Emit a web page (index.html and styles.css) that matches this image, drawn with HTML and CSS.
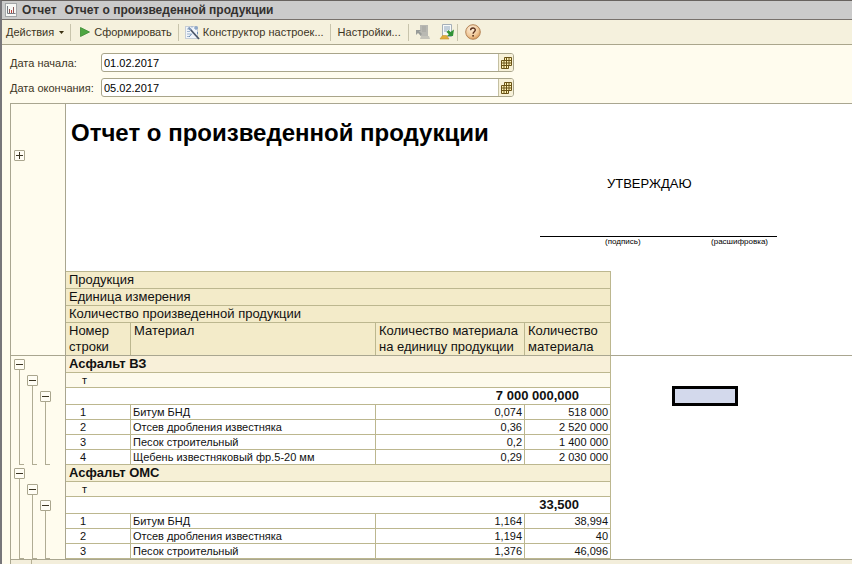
FILE: index.html
```
<!DOCTYPE html>
<html lang="ru">
<head>
<meta charset="utf-8">
<title>Отчет о произведенной продукции</title>
<link rel="stylesheet" href="styles.css">
</head>
<body>
<div class="window">
  <header class="titlebar">
    <svg class="title-icon" width="12" height="14" viewBox="0 0 12 14" aria-hidden="true">
      <rect x=".5" y=".5" width="11" height="13" fill="#f8f8f6" stroke="#a3a6a8"/>
      <path d="M2.500 3v7.500h8" fill="none" stroke="#777c84"/>
      <path d="M4.500 6v4M8.500 4v6" stroke="#8a5a5a"/>
      <path d="M6.500 7v3" stroke="#c0453f"/>
    </svg>
    <span>Отчет</span>
    <h1>Отчет о произведенной продукции</h1>
  </header>

  <nav class="toolbar">
    <button type="button" class="tool actions">Действия <svg width="5" height="3" viewBox="0 0 5 3" aria-hidden="true"><path d="M0 0h5L2.500 3z" fill="#3a3010"/></svg></button>
    <i class="sep"></i>
    <button type="button" class="tool run"><svg width="10" height="10" viewBox="0 0 10 10" aria-hidden="true"><path d="M.5.5 9.500 5 .5 9.500z" fill="#4ea641" stroke="#398a31" stroke-width=".8"/></svg>Сформировать</button>
    <i class="sep"></i>
    <button type="button" class="tool builder"><svg width="15" height="15" viewBox="0 0 15 15" aria-hidden="true">
      <rect x=".5" y="1.500" width="12" height="12" fill="#f1f5fa" stroke="#c6cdd5"/>
      <path d="M2 4h3M2 6.500h3M2 9h4M2 11.500h3" stroke="#9fb4cc"/>
      <path d="m5 4 9 10" stroke="#4b5668" stroke-width="1.800"/>
      <path d="m3.500 2.500 2.500 2.500" stroke="#7b95b8" stroke-width="2"/>
      <path d="m4 12 3-3.500M11 1v4M9 3h4M12.500 7v2M7 1.500v1" stroke="#6c8eb8"/>
    </svg>Конструктор настроек...</button>
    <i class="sep"></i>
    <button type="button" class="tool settings">Настройки...</button>
    <i class="sep"></i>
    <button type="button" class="tool icon" aria-label="Восстановить значения" disabled><svg width="16" height="16" viewBox="0 0 16 16" aria-hidden="true">
      <path d="M5 1h8v11H5z" fill="#b9b9b3"/><path d="M7 3h4M7 5h4M7 7h4" stroke="#a5a5a0"/>
      <path d="M6 12h8l1 3H5z" fill="#c5c4bb"/>
      <path d="M1 6h5L4.500 7.500 7 10l-1.500 1.500L3 9l-2 2z" fill="#999c99"/>
    </svg></button>
    <button type="button" class="tool icon" aria-label="Сохранить значения"><svg width="16" height="16" viewBox="0 0 16 16" aria-hidden="true">
      <path d="M3.500.5h9v12h-9z" fill="#f8faf8" stroke="#a5afb8"/>
      <path d="M5 3h6M5 5h6M5 7h3" stroke="#8da4bd"/>
      <path d="M1 15h9l-2.500-3.500h-4z" fill="#e1ad3d" stroke="#c4902d" stroke-width=".6"/>
      <path d="M14 12H8l1.800-1.800L7.500 8 9.500 6l2 2L15 5.500z" fill="#319337"/>
    </svg></button>
    <i class="sep"></i>
    <button type="button" class="tool icon help" aria-label="Справка"><svg width="16" height="16" viewBox="0 0 16 16" aria-hidden="true">
      <defs><radialGradient id="ball" cx=".4" cy=".3" r=".75"><stop offset="0" stop-color="#fff0dc"/><stop offset=".65" stop-color="#efc797"/><stop offset="1" stop-color="#d7924f"/></radialGradient></defs>
      <circle cx="8" cy="8" r="7.300" fill="url(#ball)" stroke="#b48558" stroke-width="1"/>
      <path d="M5.600 6.300C5.600 3.200 10.300 3.200 10.300 6c0 1.700-2.200 1.700-2.200 3.800" fill="none" stroke="#59301b" stroke-width="1.400"/>
      <rect x="7.300" y="11" width="1.600" height="1.600" fill="#59301b"/>
    </svg></button>
  </nav>

  <form class="params">
    <label for="date-from">Дата начала:</label>
    <div class="field">
      <input id="date-from" type="text" value="01.02.2017">
      <button type="button" aria-label="Выбрать дату начала"><svg width="11" height="12" viewBox="0 0 11 12" aria-hidden="true"><path d="M3.500.5h7v8h-3v3h-7v-8h3z" fill="#fff3b5" stroke="#6a5316"/><path d="M5.500 1v10M8 1v8M3 4v7M1 6h9M1 8.500h9M3 3.500h7" stroke="#6a5316"/></svg></button>
    </div>
    <label for="date-to">Дата окончания:</label>
    <div class="field">
      <input id="date-to" type="text" value="05.02.2017">
      <button type="button" aria-label="Выбрать дату окончания"><svg width="11" height="12" viewBox="0 0 11 12" aria-hidden="true"><path d="M3.500.5h7v8h-3v3h-7v-8h3z" fill="#fff3b5" stroke="#6a5316"/><path d="M5.500 1v10M8 1v8M3 4v7M1 6h9M1 8.500h9M3 3.500h7" stroke="#6a5316"/></svg></button>
    </div>
  </form>

  <main class="sheet">
    <section class="pane frozen">
      <div class="gutter top-gutter">
        <button type="button" class="node plus" aria-label="Развернуть"></button>
      </div>
      <div class="content">
        <div class="heading">
          <h2>Отчет о произведенной продукции</h2>
          <div class="approval">
            <p class="approve">УТВЕРЖДАЮ</p>
            <div class="captions"><span>(подпись)</span><span>(расшифровка)</span></div>
          </div>
        </div>
        <table class="grid head">
          <colgroup><col class="c-num"><col class="c-mat"><col class="c-unit"><col class="c-qty"></colgroup>
          <thead>
            <tr><th colspan="4">Продукция</th></tr>
            <tr><th colspan="4">Единица измерения</th></tr>
            <tr><th colspan="4">Количество произведенной продукции</th></tr>
            <tr class="columns"><th>Номер строки</th><th>Материал</th><th>Количество материала на единицу продукции</th><th>Количество материала</th></tr>
          </thead>
        </table>
      </div>
    </section>

    <section class="pane">
      <div class="gutter tree">
        <div class="branch"><button type="button" class="node" aria-label="Свернуть"></button><i></i></div>
        <div class="branch"><button type="button" class="node" aria-label="Свернуть"></button><i></i></div>
        <div class="branch"><button type="button" class="node" aria-label="Свернуть"></button><i></i></div>
      </div>
      <table class="grid">
        <colgroup><col class="c-num"><col class="c-mat"><col class="c-unit"><col class="c-qty"></colgroup>
        <tbody>
          <tr class="product"><th colspan="4">Асфальт ВЗ</th></tr>
          <tr class="unit"><td colspan="4">т</td></tr>
          <tr class="total"><td colspan="4">7 000 000,000</td></tr>
          <tr><td>1</td><td>Битум БНД</td><td>0,074</td><td>518 000</td></tr>
          <tr><td>2</td><td>Отсев дробления известняка</td><td>0,36</td><td>2 520 000</td></tr>
          <tr><td>3</td><td>Песок строительный</td><td>0,2</td><td>1 400 000</td></tr>
          <tr><td>4</td><td>Щебень известняковый фр.5-20 мм</td><td>0,29</td><td>2 030 000</td></tr>
        </tbody>
      </table>
      <div class="selected-cell"></div>
    </section>

    <section class="pane">
      <div class="gutter tree">
        <div class="branch"><button type="button" class="node" aria-label="Свернуть"></button><i></i></div>
        <div class="branch"><button type="button" class="node" aria-label="Свернуть"></button><i></i></div>
        <div class="branch"><button type="button" class="node" aria-label="Свернуть"></button><i></i></div>
      </div>
      <table class="grid">
        <colgroup><col class="c-num"><col class="c-mat"><col class="c-unit"><col class="c-qty"></colgroup>
        <tbody>
          <tr class="product second"><th colspan="4">Асфальт ОМС</th></tr>
          <tr class="unit"><td colspan="4">т</td></tr>
          <tr class="total"><td colspan="4">33,500</td></tr>
          <tr><td>1</td><td>Битум БНД</td><td>1,164</td><td>38,994</td></tr>
          <tr><td>2</td><td>Отсев дробления известняка</td><td>1,194</td><td>40</td></tr>
          <tr><td>3</td><td>Песок строительный</td><td>1,376</td><td>46,096</td></tr>
        </tbody>
      </table>
    </section>
    <div class="scrollbar"><i></i></div>
  </main>
</div>
</body>
</html>
```
FILE: styles.css
```
* { box-sizing: border-box; }
body {
  margin: 0;
  background: #fffcee;
  color: #3d361f;
  font: 11px/16px "Liberation Sans", Arial, sans-serif;
}
h1, h2, p { margin: 0; font: inherit; }
button, input { font: inherit; color: inherit; margin: 0; padding: 0; border: 0; background: none; }
svg { flex: none; display: block; }

.window {
  min-height: 100vh;
  display: flex;
  flex-direction: column;
  border-top: 1px solid #67625f;
  border-left: 2px solid #77767a;
  overflow: hidden;
}
.titlebar {
  display: flex;
  align-items: center;
  gap: 8px;
  height: 19px;
  padding-left: 3px;
  background: #cbcbcb;
  border-bottom: 1px solid #77716c;
  font-size: 12px;
  font-weight: bold;
  color: #33312f;
}
.title-icon { margin-right: -3px; }

.toolbar {
  display: flex;
  align-items: center;
  height: 25px;
  padding-left: 4px;
  background: #f5f1dd;
  border-bottom: 1px solid #aaa68c;
}
.tool { display: flex; align-items: center; white-space: nowrap; }
.sep { width: 1px; height: 17px; background: #c8c4ac; flex: none; }
.actions { gap: 5px; padding-right: 6px; }
.run { gap: 4px; padding: 0 6px 0 9px; }
.builder { gap: 3px; padding: 0 6px; }
.settings { padding: 0 7px; }
.icon { padding: 0 2px 0 6px; }
.help { padding-left: 7px; }

.params {
  display: grid;
  grid-template-columns: 85px minmax(200px, 413px);
  gap: 6px;
  align-items: center;
  padding: 8px 8px 6px;
  white-space: nowrap;
}
.field {
  display: flex;
  height: 19px;
  background: #fff;
  border: 1px solid #a9a58a;
  border-radius: 3px;
  overflow: hidden;
}
.field input { flex: 1; min-width: 0; padding-left: 2px; color: #000; outline: none; }
.field button {
  width: 15px;
  display: flex;
  align-items: center;
  justify-content: center;
  background: #f7f1d8;
  border-left: 1px solid #c5c0a2;
}

.sheet {
  flex: 1;
  display: flex;
  flex-direction: column;
  margin-left: 8px;
  border: solid #a9a690;
  border-width: 1px 0 0 1px;
  background: #fff;
}
.pane { display: flex; align-items: stretch; }
.frozen { border-bottom: 1px solid #a9a690; }
.content { flex: 1; min-width: 0; }
.gutter { flex: none; width: 55px; background: #fffcee; border-right: 1px solid #a9a690; }
.top-gutter { padding: 46px 3px; }
.node {
  display: block;
  width: 11px;
  height: 11px;
  border: 1px solid #aaa68e;
  border-radius: 1px;
  background: linear-gradient(#3b3523, #3b3523) center / 7px 1px no-repeat, #fffdf4;
}
.plus {
  background:
    linear-gradient(#3b3523, #3b3523) center / 7px 1px no-repeat,
    linear-gradient(#3b3523, #3b3523) center / 1px 7px no-repeat,
    #fffdf4;
}
.tree { display: flex; gap: 2px; padding: 3px 3px 0; }
.branch { display: flex; flex-direction: column; width: 11px; }
.branch:nth-child(2) { padding-top: 16px; }
.branch:nth-child(3) { padding-top: 32px; }
.branch i { flex: 1; width: 5px; margin-left: 5px; border: solid #b0ac94; border-width: 0 0 1px 1px; }

.heading { height: 167px; padding: 15px 5px 0; color: #000; }
.heading h2 { font-size: 24px; line-height: 28px; font-weight: bold; }
.approval { width: 237px; margin: 28px 0 0 469px; }
.approve { font-size: 13px; line-height: 17px; padding-left: 67px; }
.captions {
  display: flex;
  justify-content: space-between;
  margin-top: 44px;
  padding: 0 9px 0 65px;
  border-top: 1px solid #000;
  font-size: 8px;
  line-height: 10px;
}

.grid { flex: none; width: 545px; table-layout: fixed; border-spacing: 0; color: #111; }
.c-num { width: 65px; }
.c-mat { width: 245px; }
.c-unit { width: 149px; }
.c-qty { width: 86px; }
.grid th, .grid td {
  height: 15px;
  padding: 0 2px;
  border: solid #bcb78f;
  border-width: 0 1px 1px 0;
  line-height: 14px;
  text-align: left;
  vertical-align: top;
  white-space: nowrap;
}
.grid td:nth-child(n+3) { text-align: right; }
.grid td:first-child { padding-left: 14px; }
.head { border-top: 1px solid #bcb78f; }
.grid.head th {
  height: 17px;
  padding: 0 3px;
  background: #f3ebc9;
  font-size: 13px;
  font-weight: normal;
  line-height: 16px;
  white-space: normal;
}
.grid.head .columns th { border-bottom: 0; }
.grid .product th { height: 17px; padding: 0 3px; background: #f8f0d9; font-size: 13px; line-height: 16px; }
.grid .second th { background: #f6f0d6; }
.grid .unit td { background: #fdfaec; padding-left: 16px; }
.grid .total td { height: 17px; padding-right: 31px; font-size: 13px; line-height: 16px; font-weight: bold; text-align: right; }

.selected-cell {
  width: 66px;
  height: 20px;
  margin: 30px 0 0 61px;
  background: #d3d9ec;
  border: 3px solid #000;
}
.scrollbar { flex: 1; background: #f3eedb; border-top: 1px solid #a9a690; display: flex; }
.scrollbar i { width: 21px; border-right: 1px solid #b5b095; }
```
